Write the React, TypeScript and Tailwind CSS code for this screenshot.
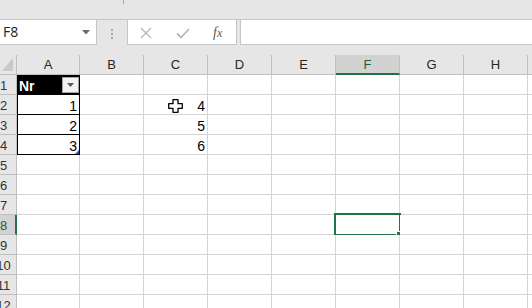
import React from 'react';

const COLS = ['A', 'B', 'C', 'D', 'E', 'F', 'G', 'H', 'I'];
const WIDTHS: Record<string, string> = {
  A: 'w-[63px]',
  B: 'w-[64px]',
  C: 'w-[64px]',
  D: 'w-[64px]',
  E: 'w-[64px]',
  F: 'w-[64px]',
  G: 'w-[64px]',
  H: 'w-[64px]',
  I: 'w-[64px]',
};

const DATA: Record<number, Record<string, string>> = {
  2: { A: '1', C: '4' },
  3: { A: '2', C: '5' },
  4: { A: '3', C: '6' },
};

const ROWS = [1, 2, 3, 4, 5, 6, 7, 8, 9, 10, 11, 12];

const FormulaBar: React.FC = () => (
  <div className="h-[25px] shrink-0 flex">
    {/* Name box */}
    <div className="w-[97px] h-full bg-white border-r border-b border-[#c6c6c6] flex items-center justify-between pl-[3px] pr-[6px]">
      <span className="text-[14px] text-[#222] font-['Open_Sans',sans-serif] leading-none">F8</span>
      <svg width="8" height="5" viewBox="0 0 8 5">
        <path d="M0 0 L8 0 L4 4.5 Z" fill="#6a6a6a" />
      </svg>
    </div>

    {/* Grip dots */}
    <div className="w-[30px] flex flex-col items-center justify-center gap-[2px] pt-[2px]">
      <div className="w-[2px] h-[2px] bg-[#a8a8a8]" />
      <div className="w-[2px] h-[2px] bg-[#a8a8a8]" />
      <div className="w-[2px] h-[2px] bg-[#a8a8a8]" />
    </div>

    {/* Cancel / enter / fx */}
    <div className="w-[110px] h-full bg-white border-x border-b border-[#c6c6c6] flex items-center pl-[12px] pt-[2px]">
      <svg width="12" height="12" viewBox="0 0 12 12">
        <path d="M1 1 L11 11 M11 1 L1 11" stroke="#b8b8b8" strokeWidth="1.4" />
      </svg>
      <svg width="14" height="11" viewBox="0 0 14 11" className="ml-[24px]">
        <path d="M1 5.5 L5 9.5 L13 1" stroke="#b8b8b8" strokeWidth="1.8" fill="none" />
      </svg>
      <span className="ml-[23px] font-['Liberation_Serif',serif] italic text-[14px] text-[#5a5a5a] leading-none">
        f<span className="text-[12px]">x</span>
      </span>
    </div>

    <div className="w-[3px]" />

    {/* Formula input */}
    <div className="flex-1 h-full bg-white border-l border-b border-[#c6c6c6]" />
  </div>
);

const HeaderRow: React.FC = () => (
  <div className="h-[20px] shrink-0 flex">
    <div className="w-[17px] shrink-0 border-r border-b border-[#bfbfbf] flex items-end justify-end pr-[3px] pb-[3px]">
      <svg width="11" height="13" viewBox="0 0 11 13">
        <path d="M11 0 L11 13 L0 13 Z" fill="#c9c9c9" />
      </svg>
    </div>
    {COLS.map((c) => {
      const sel = c === 'F';
      return (
        <div
          key={c}
          className={`${WIDTHS[c]} shrink-0 border-r border-[#bfbfbf] flex items-center justify-center text-[13px] leading-none ${
            sel
              ? 'bg-[#d2d2d2] border-b-2 border-b-[#217346] text-[#1e5e3b]'
              : 'border-b text-[#262626]'
          }`}
        >
          {c}
        </div>
      );
    })}
  </div>
);

const Cursor: React.FC = () => (
  <svg width="15" height="14" viewBox="0 0 15 14" className="absolute left-[24px] top-[4px]">
    <path
      d="M5 0.7 H10 V4.7 H14.3 V9.3 H10 V13.3 H5 V9.3 H0.7 V4.7 H5 Z"
      fill="#fff"
      stroke="#000"
      strokeWidth="1.3"
      strokeLinejoin="round"
    />
  </svg>
);

const Row: React.FC<{ n: number }> = ({ n }) => {
  const selRow = n === 8;
  return (
    <div className="h-[20px] shrink-0 flex">
      <div
        className={`w-[17px] shrink-0 border-b border-[#bfbfbf] flex items-center overflow-hidden ${
          selRow ? 'bg-[#d2d2d2] border-r-2 border-r-[#217346] text-[#1e5e3b]' : 'border-r text-[#333]'
        }`}
      >
        <div className="w-[7px] shrink-0 flex justify-center text-[13px] leading-none pt-[2px]">
          {n}
        </div>
      </div>
      {COLS.map((c) => {
        const val = DATA[n]?.[c];
        const isHead = n === 1 && c === 'A';
        const inTable = c === 'A' && n >= 2 && n <= 4;
        const borders = isHead || inTable ? 'border-black' : 'border-[#d4d4d4]';
        return (
          <div
            key={c}
            className={`${WIDTHS[c]} shrink-0 relative border-r border-b ${borders} ${
              isHead ? 'bg-black' : 'bg-white'
            } ${inTable ? 'shadow-[inset_1px_0_0_#000]' : ''} flex items-center`}
          >
            {isHead && (
              <div className="flex-1 flex items-center justify-between pl-[2px]">
                <span className="text-white font-bold text-[14px] leading-none pt-[2px]">Nr</span>
                <div className="w-[17px] h-[16px] bg-[#f2f2f2] border border-[#a3a3a3] flex items-center justify-center">
                  <svg width="7" height="4" viewBox="0 0 7 4">
                    <path d="M0 0 H7 L3.5 4 Z" fill="#595959" />
                  </svg>
                </div>
              </div>
            )}
            {val && (
              <span className="flex-1 text-right pr-[2px] text-[14px] text-black leading-none pt-[3px]">
                {val}
              </span>
            )}
            {n === 2 && c === 'C' && <Cursor />}
            {n === 4 && c === 'A' && (
              <svg width="4" height="4" viewBox="0 0 4 4" className="absolute right-0 bottom-0">
                <path d="M4 0 V4 H0 Z" fill="#3f4fb4" />
              </svg>
            )}
            {selRow && c === 'F' && (
              <>
                <div className="absolute -left-[2px] -top-[2px] w-[67px] h-[23px] border-2 border-[#217346]" />
                <div className="absolute left-[60px] top-[16px] w-[7px] h-[7px] bg-[#217346] border border-white" />
              </>
            )}
          </div>
        );
      })}
    </div>
  );
};

export default function App() {
  return (
    <div className="w-[532px] h-[308px] overflow-hidden bg-[#e6e6e6] flex flex-col font-['Liberation_Sans',sans-serif]">
      <div className="h-[20px] shrink-0 border-b border-[#c6c6c6] pl-[123px]">
        <div className="w-px h-[4px] bg-[#a6a6a6]" />
      </div>
      <FormulaBar />
      <div className="h-[10px] shrink-0" />
      <HeaderRow />
      {ROWS.map((n) => (
        <Row key={n} n={n} />
      ))}
    </div>
  );
}
